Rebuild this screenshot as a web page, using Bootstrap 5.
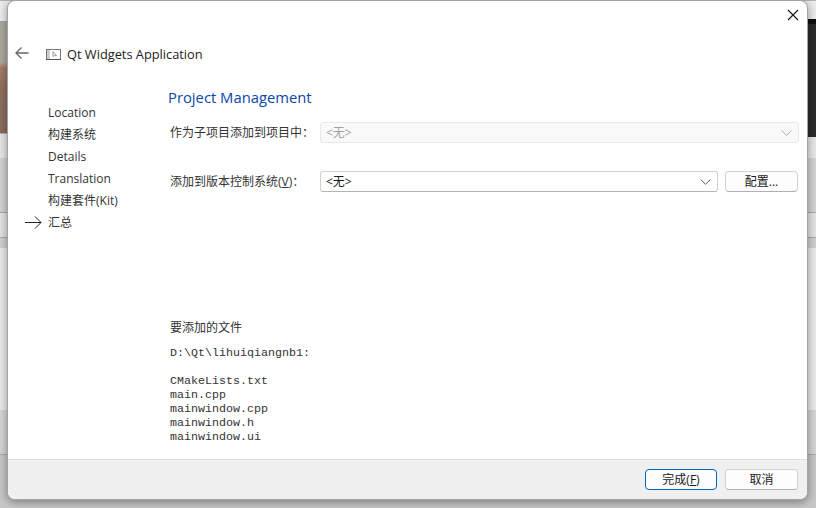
<!doctype html>
<html lang="zh">
<head>
<meta charset="utf-8">
<title>Qt Widgets Application</title>
<link href="https://cdn.jsdelivr.net/npm/bootstrap@5.3.0/dist/css/bootstrap.min.css" rel="stylesheet">
<style>
html,body{margin:0;height:100%;overflow:hidden}
body{
  font-family:"Open Sans","Noto Sans CJK SC",sans-serif;font-size:12px;color:#1a1a1a;
  background:linear-gradient(to bottom,#ebebeb 0 21px,#a8a89f 21px 62px,#a67b69 68px,#8f6e5e 90px,#8c6c5c 133px,#e6e6e6 134px 158px,#d2d2d2 158px 212px,#a8a8a8 212px 213px,#e2e2e2 213px 237px,#a8a8a8 237px 238px,#cfcfcf 238px 248px,#e9e9e9 248px 410px,#d4d4d4 410px 454px,#a8a8a8 454px 455px,#c6c6c6 455px);
}
.topstrip{height:1px;background:linear-gradient(to right,#b4b4b4 0 161px,#333 161px 194px,#3aa77a 194px 207px,#333 207px 240px,#b4b4b4 240px)}
.darkside{position:absolute;left:808px;top:19px;width:8px;height:118px;background:linear-gradient(to bottom,#0e0e0e 0 5px,#2a2a2a 5px)}
.dlg{position:absolute;left:7px;top:0;width:801px;height:500px;background:#fff;border:1px solid #a3a3a3;border-radius:8px;box-shadow:0 2px 9px rgba(0,0,0,.38);overflow:hidden}
.headrow{height:109px;position:relative;flex:none}
.backbtn{position:absolute;left:6px;top:45px;width:16px;height:14px}
.closebtn{position:absolute;left:779px;top:8px;width:12px;height:12px}
.wiz-icon{position:absolute;left:38px;top:47px;width:15px;height:13px}
.wiz-title{position:absolute;left:59px;top:44px;font-size:12.8px;line-height:18px;color:#1c1c1c}
.bodyrow{height:349px;flex:none}
.steps{width:162px;padding-left:40px;margin:-8px 0 0;list-style:none;flex:none}
.steps li{height:22px;line-height:22px;font-size:12px;color:#333;position:relative;white-space:nowrap}
.steps svg{position:absolute;left:-23px;top:4px;width:17px;height:13px}
.pane{width:630px;margin-top:-23px}
.pane-title{font-size:14.8px;line-height:20px;color:#0a47a8;margin:0 0 15px -2px;font-weight:400;white-space:nowrap}
.lbl{width:150px;font-size:12px;line-height:21px;color:#333;flex:none;white-space:nowrap}
.lbl u{text-underline-offset:1px}
.form-select.sel{height:21px;min-height:0;padding:0 20px 0 5px;font:12px/19px "Open Sans","Noto Sans CJK SC",sans-serif;border-radius:3px;border:1px solid #d0d0d0;border-bottom-color:#b4b4b4;color:#1a1a1a;background-color:#fff;background-position:right 6px center;background-size:11px 8px;flex:none;
 background-image:url("data:image/svg+xml,%3csvg xmlns='http://www.w3.org/2000/svg' viewBox='0 0 11 8'%3e%3cpath fill='none' stroke='%23555' d='M.7 1.5 5.5 6.3l4.8-4.8'/%3e%3c/svg%3e")}
.form-select.sel:disabled{background-color:#f9f9f9;border-color:#e8e8e8;color:#a2a2a2;opacity:1;
 background-image:url("data:image/svg+xml,%3csvg xmlns='http://www.w3.org/2000/svg' viewBox='0 0 11 8'%3e%3cpath fill='none' stroke='%23aaa' d='M.7 1.5 5.5 6.3l4.8-4.8'/%3e%3c/svg%3e")}
.w-wide{width:479px}.w-mid{width:398px;margin-right:7px}
.btn.qtbtn{width:73px;height:21px;padding:0;font:12px/19px "Open Sans","Noto Sans CJK SC",sans-serif;border:1px solid #d2d2d2;border-bottom-color:#b0b0b0;border-radius:4px;background:#fdfdfd;color:#1a1a1a;flex:none}
.btn.qtbtn.main{width:72px;border-color:#0067c0}
.row-gap{margin-top:28px}
.files-title{margin-top:127px;font-size:12px;line-height:18px;color:#333}
.files{margin:9px 0 0;font-family:"Liberation Mono",monospace;font-size:11.67px;line-height:14px;color:#333;overflow:visible}
.foot{height:40px;flex:none;background:#f0f0f0;border-top:1px solid #dfdfdf;padding:9px 9px 0 0;gap:8px}
</style>
</head>
<body>
<div class="topstrip"></div>
<div class="darkside"></div>
<div class="dlg d-flex flex-column">
  <div class="headrow">
    <svg class="backbtn" viewBox="0 0 16 14"><path d="M14.500 7H2M7.500 1.500 2 7l5.500 5.500" fill="none" stroke="#666" stroke-width="1.300"/></svg>
    <svg class="wiz-icon" viewBox="0 0 15 13"><rect x=".5" y="1.500" width="14" height="10" fill="none" stroke="#777"/><path d="M0 11.500h15" stroke="#555"/><rect x="1" y="2" width="3" height="9" fill="#ccc"/><path d="M7 3.500v5l1.500-1 2 .2z" fill="none" stroke="#888" stroke-width=".8"/></svg>
    <span class="wiz-title">Qt Widgets Application</span>
    <svg class="closebtn" viewBox="0 0 12 12"><path d="M1 1l10 10M11 1 1 11" stroke="#111" stroke-width="1.100" fill="none"/></svg>
  </div>
  <div class="bodyrow d-flex">
    <ul class="steps">
      <li>Location</li>
      <li>构建系统</li>
      <li>Details</li>
      <li>Translation</li>
      <li>构建套件(Kit)</li>
      <li><svg viewBox="0 0 17 13"><path d="M0 6.500h16M10 .5l6 6-6 6" fill="none" stroke="#222" stroke-width="1"/></svg>汇总</li>
    </ul>
    <div class="pane d-flex flex-column">
      <h1 class="pane-title">Project Management</h1>
      <div class="d-flex">
        <span class="lbl">作为子项目添加到项目中：</span>
        <select class="form-select sel w-wide" disabled><option>&lt;无&gt;</option></select>
      </div>
      <div class="d-flex row-gap">
        <span class="lbl">添加到版本控制系统(<u>V</u>)：</span>
        <select class="form-select sel w-mid"><option>&lt;无&gt;</option></select>
        <button class="btn qtbtn" type="button">配置...</button>
      </div>
      <div class="files-title">要添加的文件</div>
      <pre class="files">D:\Qt\lihuiqiangnb1:

CMakeLists.txt
main.cpp
mainwindow.cpp
mainwindow.h
mainwindow.ui</pre>
    </div>
  </div>
  <div class="foot d-flex justify-content-end">
    <button class="btn qtbtn main" type="button">完成(<u>F</u>)</button>
    <button class="btn qtbtn" type="button">取消</button>
  </div>
</div>
</body>
</html>
